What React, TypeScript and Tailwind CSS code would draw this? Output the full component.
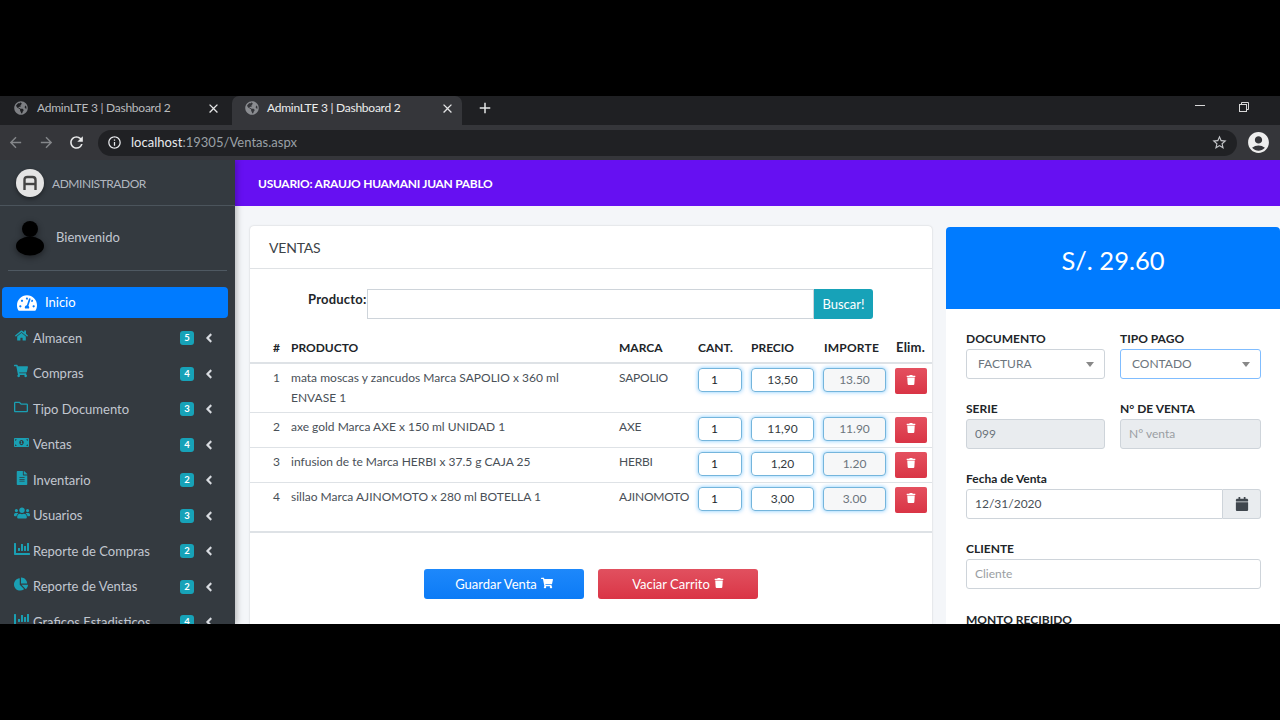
import React from "react";
import { FaGlobeAmericas, FaTachometerAlt, FaHome, FaShoppingCart, FaRegFolder, FaMoneyBillAlt, FaFileAlt, FaUsers, FaChartBar, FaChartPie, FaTrash, FaCalendar, FaAngleLeft } from "react-icons/fa";
import { MdAccountCircle, MdRefresh, MdArrowBack, MdArrowForward, MdClose, MdAdd, MdStarBorder, MdInfoOutline } from "react-icons/md";

const font = "font-['Lato','Noto_Sans',sans-serif]";

const menu: [React.ReactNode, string, string][] = [
  [<FaHome className="text-[13px] ml-[1px]" />, "Almacen", "5"],
  [<FaShoppingCart className="text-[14px]" />, "Compras", "4"],
  [<FaRegFolder className="text-[14px]" />, "Tipo Documento", "3"],
  [<FaMoneyBillAlt className="text-[15px]" />, "Ventas", "4"],
  [<FaFileAlt className="text-[14px] ml-[1px]" />, "Inventario", "2"],
  [<FaUsers className="text-[16px]" />, "Usuarios", "3"],
  [<FaChartBar className="text-[16px]" />, "Reporte de Compras", "2"],
  [<FaChartPie className="text-[14px]" />, "Reporte de Ventas", "2"],
  [<FaChartBar className="text-[16px]" />, "Graficos Estadisticos", "4"],
];

const rows: [string, React.ReactNode, string, string, string, string][] = [
  ["1", <><span className="tracking-[0.02px]">mata moscas y zancudos Marca SAPOLIO x 360 ml</span> ENVASE 1</>, "SAPOLIO", "13,50", "13.50", "h-[49px]"],
  ["2", "axe gold Marca AXE x 150 ml UNIDAD 1", "AXE", "11,90", "11.90", "h-[35px]"],
  ["3", "infusion de te Marca HERBI x 37.5 g CAJA 25", "HERBI", "1,20", "1.20", "h-[35px]"],
  ["4", "sillao Marca AJINOMOTO x 280 ml BOTELLA 1", "AJINOMOTO", "3,00", "3.00", "h-[35px]"],
];

const glow = "border border-[#74b5dc] rounded-[4px] shadow-[0_0_4px_rgba(0,150,255,0.5)]";
const label = "text-[12px] font-bold leading-[18px] text-[#212529] pt-[1px] pb-[1px]";

function Field({ title, value, kind, className }: { title: string; value: string; kind: string; className: string }) {
  return (
    <div className={className}>
      <div className={label}>{title}</div>
      <div
        className={`h-[30px] flex items-center justify-between rounded-[3px] border text-[12px] ${
          kind === "off" ? "bg-[#e9ecef] border-[#ced4da] px-[8px]" : kind === "focus" ? "bg-white border-[#80bdff] pl-[11px] pr-[10px]" : "bg-white border-[#ced4da] pl-[11px] pr-[10px]"
        }`}
      >
        <span className={value === "N° venta" ? "text-[#9a9ea3]" : "text-[#6c757d]"}>{value}</span>
        {kind !== "off" && <span className="w-0 h-0 border-x-[4px] border-x-transparent border-t-[5px] border-t-[#888]" />}
      </div>
    </div>
  );
}

export default function App() {
  return (
    <div className={`w-[1280px] h-[720px] bg-black overflow-hidden flex flex-col ${font}`}>
      <div className="h-[96px] shrink-0" />
      <div className="h-[528px] shrink-0 flex flex-col overflow-hidden">
        {/* tabs */}
        <div className="h-[29px] shrink-0 bg-[#1f2023] flex items-stretch text-[12px] tracking-[-0.25px] text-white">
          <div className="w-[232px] flex items-center pl-[14px] pr-[11px] pb-[5px] text-[#b9bbbe]">
            <FaGlobeAmericas className="text-[14px] text-[#7d7f83]" />
            <span className="ml-[9px] flex-1">AdminLTE 3 | Dashboard 2</span>
            <MdClose className="text-[15px] text-[#e4e5e6]" />
          </div>
          <div className="w-[230px] bg-[#35363a] rounded-t-[7px] flex items-center pl-[13px] pr-[7px] pb-[5px] text-[#eceded]">
            <FaGlobeAmericas className="text-[14px] text-[#8a8c90]" />
            <span className="ml-[8px] flex-1">AdminLTE 3 | Dashboard 2</span>
            <MdClose className="text-[15px] text-[#e4e5e6]" />
          </div>
          <div className="flex items-center ml-[14px] pb-[5px]">
            <MdAdd className="text-[18px] text-[#e4e5e6]" />
          </div>
          <div className="flex-1 flex items-start justify-end pr-[31px] pt-[6px] gap-[34px]">
            <div className="w-[10px] h-[1px] bg-[#d8d8d8] mt-[3px]" />
            <svg width="10" height="10" viewBox="0 0 10 10" fill="none" stroke="#d8d8d8" strokeWidth="1">
              <rect x="0.5" y="2.5" width="7" height="7" />
              <path d="M2.5 2.5V0.5H9.5V7.5H7.5" />
            </svg>
          </div>
        </div>
        {/* toolbar */}
        <div className="h-[35px] shrink-0 bg-[#35363a] flex items-center pl-[7px] pr-[8px]">
          <MdArrowBack className="text-[17px] text-[#85878a]" />
          <MdArrowForward className="text-[17px] text-[#85878a] ml-[14px]" />
          <MdRefresh className="text-[19px] text-[#e8e9ea] ml-[12px]" />
          <div className="ml-[12px] w-[1139px] h-[26px] bg-[#202124] rounded-full flex items-center pl-[9px] pr-[9px]">
            <MdInfoOutline className="text-[15px] text-[#e8eaed]" />
            <span className="ml-[9px] text-[13px] tracking-[0.03px] text-[#e8eaed] flex-1">
              localhost<span className="text-[#9aa0a6]">:19305/Ventas.aspx</span>
            </span>
            <MdStarBorder className="text-[17px] text-[#c4c6c9]" />
          </div>
          <MdAccountCircle className="ml-[9px] text-[25px] text-[#eeeeee]" />
        </div>
        <div className="flex-1 flex min-h-0 overflow-hidden">
          {/* sidebar */}
          <aside className="w-[235px] shrink-0 bg-[#343a40] flex flex-col overflow-hidden shadow-[2px_0_6px_rgba(0,0,0,0.25)] z-10">
            <div className="h-[46px] shrink-0 border-b border-[#4b545c] flex items-center pl-[16px]">
              <div className="w-[28px] h-[28px] rounded-full bg-[#e4e4e4] flex items-center justify-center shadow-[0_2px_4px_rgba(0,0,0,0.4)]">
                <svg width="16" height="16" viewBox="0 0 16 16" fill="none" stroke="#444" strokeWidth="2.4">
                  <path d="M2.5 15V5Q2.5 2 5.5 2H10.5Q13.5 2 13.5 5V15" />
                  <path d="M2.5 9H13.5" />
                </svg>
              </div>
              <span className="ml-[8px] pt-[3px] text-[12px] text-[#c2c7d0]/90 tracking-[-0.45px]">ADMINISTRADOR</span>
            </div>
            <div className="mx-[8px] h-[65px] shrink-0 border-b border-[#4f5962] flex items-center pl-[5px]">
              <svg width="34" height="38" viewBox="0 0 34 38" className="drop-shadow-[0_2px_3px_rgba(0,0,0,0.45)]">
                <circle cx="17" cy="10" r="8" fill="#000" />
                <ellipse cx="17" cy="27" rx="14" ry="9.5" fill="#000" />
              </svg>
              <span className="ml-[9px] text-[13px] text-[#c2c7d0]">Bienvenido</span>
            </div>
            <div className="mt-[16px] mx-[2px] w-[226px] h-[31px] shrink-0 rounded-[4px] bg-[#007bff] flex items-center pl-[15px] text-white text-[13px]">
              <FaTachometerAlt className="text-[20px] mr-[8px]" />
              Inicio
            </div>
            <div className="mt-[2.5px] flex flex-col">
              {menu.map(([icon, name, n], i) => (
                <div key={i} className="h-[35.5px] shrink-0 flex items-center pl-[14px] pr-[19px] text-[13px] text-[#c2c7d0]">
                  <span className="w-[19px] text-[#1a9fb3] mt-[-5px]">{icon}</span>
                  <span className="flex-1">{name}</span>
                  <span className="w-[14px] h-[14px] rounded-[3px] bg-[#17a2b8] text-white text-[9.5px] font-bold flex items-center justify-center">{n}</span>
                  <FaAngleLeft className="ml-[8px] text-[14px] text-[#d8dbe0]" />
                </div>
              ))}
            </div>
          </aside>
          {/* main */}
          <div className="flex-1 min-w-0 flex flex-col">
            <header className="h-[46px] shrink-0 bg-[#6610f2] flex items-center pl-[23px] pt-[1px] text-white text-[12px] font-bold tracking-[-0.28px]">
              USUARIO: ARAUJO HUAMANI JUAN PABLO
            </header>
            <div className="flex-1 bg-[#f4f6f9] flex items-start pl-[15px] pt-[20px] gap-[14px] min-h-0 overflow-hidden">
              {/* ventas card */}
              <section className="w-[682px] h-[420px] shrink-0 bg-white rounded-t-[4px] shadow-[0_0_2px_rgba(0,0,0,0.2)]">
                <div className="h-[43px] border-b border-[#dfe2e5] flex items-center pl-[19px] text-[14px] tracking-[-0.2px] text-[#3d4348]">VENTAS</div>
                <div className="h-[63px] flex items-start pl-[58px] pt-[20px]">
                  <label className="w-[59px] pt-[1px] text-[13px] font-bold tracking-[0.2px] text-[#212529] leading-[18px] whitespace-nowrap">Producto:</label>
                  <div className="w-[447px] h-[30px] border border-[#ced4da] bg-white" />
                  <div className="w-[59px] h-[30px] pt-[1px] rounded-r-[3px] bg-[#17a2b8] text-white text-[13px] flex items-center justify-center">Buscar!</div>
                </div>
                <table className="table-fixed border-collapse text-[12px] text-[#495057]" style={{ width: 682 }}>
                  <colgroup>
                    <col className="w-[41px]" />
                    <col className="w-[328px]" />
                    <col className="w-[79px]" />
                    <col className="w-[53px]" />
                    <col className="w-[72px]" />
                    <col className="w-[72px]" />
                    <col className="w-[37px]" />
                  </colgroup>
                  <thead>
                    <tr className="h-[31px] border-b-2 border-[#dee2e6] text-[12px] font-bold text-[#212529] text-left">
                      <th className="pl-[23px] pt-[2px] font-bold">#</th>
                      <th className="pt-[2px] font-bold">PRODUCTO</th>
                      <th className="pt-[2px] font-bold">MARCA</th>
                      <th className="pt-[2px] font-bold">CANT.</th>
                      <th className="pt-[2px] font-bold">PRECIO</th>
                      <th className="pl-[1px] pt-[2px] font-bold tracking-[0.2px]">IMPORTE</th>
                      <th className="pl-[1px] pt-[2px] font-bold text-[13px] tracking-[0.2px]">Elim.</th>
                    </tr>
                  </thead>
                  <tbody>
                    {rows.map(([id, prod, marca, pre, imp, h]) => (
                      <tr key={id} className={`${h} border-b border-[#dee2e6] last:border-b-0 align-top`}>
                        <td className="pl-[23px] pt-[4px] leading-[20px]">{id}</td>
                        <td className="pt-[4px] pr-[20px] leading-[20px]">{prod}</td>
                        <td className="pt-[4px] leading-[20px] whitespace-nowrap tracking-[-0.2px]">{marca}</td>
                        <td className="pt-[4px]">
                          <div className={`w-[44px] h-[24px] ${glow} flex items-center pl-[12px] text-[#212529]`}>1</div>
                        </td>
                        <td className="pt-[4px]">
                          <div className={`w-[63px] h-[24px] ${glow} flex items-center justify-center text-[#343a40]`}>{pre}</div>
                        </td>
                        <td className="pt-[4px]">
                          <div className={`w-[63px] h-[24px] ${glow} bg-[#f6f7f8] flex items-center justify-center text-[#6c757d]`}>{imp}</div>
                        </td>
                        <td className="pt-[4px]">
                          <div className="w-[32px] h-[26px] rounded-[2px] bg-linear-to-b from-[#e4505f] to-[#d93445] flex items-center justify-center pb-[3px]">
                            <FaTrash className="text-[10px] text-white" />
                          </div>
                        </td>
                      </tr>
                    ))}
                  </tbody>
                </table>
                <div className="mt-[14px] border-t-2 border-[#dee2e6] flex pl-[174px] pt-[36px] gap-[14px] text-white text-[13px]">
                  <div className="w-[160px] h-[30px] pt-[1px] rounded-[3px] bg-linear-to-b from-[#1d88fb] to-[#0b7bf6] flex items-center justify-center gap-[4px]">
                    Guardar Venta <FaShoppingCart className="text-[12px] mt-[-3px]" />
                  </div>
                  <div className="w-[160px] h-[30px] pt-[1px] rounded-[3px] bg-linear-to-b from-[#e1505f] to-[#da3446] flex items-center justify-center gap-[4px]">
                    Vaciar Carrito <FaTrash className="text-[10px] mt-[-3px]" />
                  </div>
                </div>
              </section>
              {/* right card */}
              <section className="w-[334px] h-[420px] shrink-0 bg-white rounded-tl-[4px] mt-[1px]">
                <div className="h-[82px] bg-[#007bff] rounded-t-[4px] flex items-center justify-center text-white text-[25.5px] pb-[16px]">S/. 29.60</div>
                <div className="pl-[20px] pr-[19px] pt-[20px] flex flex-wrap gap-x-[15px] gap-y-[20px]">
                  <Field className="w-[139px]" title="DOCUMENTO" value="FACTURA" kind="sel" />
                  <Field className="w-[141px]" title="TIPO PAGO" value="CONTADO" kind="focus" />
                  <Field className="w-[139px]" title="SERIE" value="099" kind="off" />
                  <Field className="w-[141px]" title="N° DE VENTA" value="N° venta" kind="off" />
                  <div className="w-[295px]">
                    <div className={label}>Fecha de Venta</div>
                    <div className="h-[30px] flex text-[12px] text-[#495057]">
                      <div className="flex-1 border border-[#ced4da] rounded-l-[3px] flex items-center pl-[8px]">12/31/2020</div>
                      <div className="w-[38px] bg-[#e9ecef] border border-l-0 border-[#ced4da] rounded-r-[3px] flex items-center justify-center">
                        <FaCalendar className="text-[14px] text-[#3f464d]" />
                      </div>
                    </div>
                  </div>
                  <div className="w-[295px]">
                    <div className={label}>CLIENTE</div>
                    <div className="h-[30px] border border-[#ced4da] rounded-[3px] flex items-center pl-[8px] text-[12px] text-[#9a9ea3]">Cliente</div>
                  </div>
                  <div className="w-[295px] text-[12px] font-bold leading-[18px] text-[#212529] pt-[2px]">MONTO RECIBIDO</div>
                </div>
              </section>
            </div>
          </div>
        </div>
      </div>
    </div>
  );
}
